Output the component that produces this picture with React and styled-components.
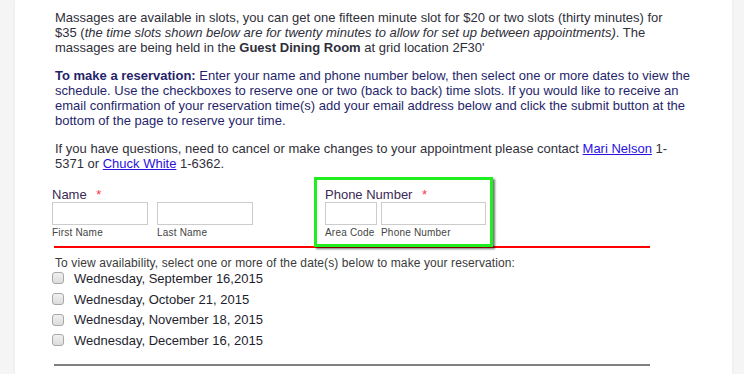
import React from "react";
import styled, { createGlobalStyle } from "styled-components";

const GlobalStyle = createGlobalStyle`
  html, body {
    margin: 0;
    padding: 0;
    background: #f5f5f5;
    font-family: "Liberation Sans", Arial, sans-serif;
  }
`;

const dates = [
  "Wednesday, September 16,2015",
  "Wednesday, October 21, 2015",
  "Wednesday, November 18, 2015",
  "Wednesday, December 16, 2015",
];

const App = () => {
  return (
    <>
      <GlobalStyle />
      <Page>
        <Panel>
          <Intro>
            <Para>
              Massages are available in slots, you can get one fifteen minute slot for $20 or two
              slots (thirty minutes) for {"$35\u00a0("}
              <i>the time slots shown below are for twenty minutes to allow for set up between appointments)</i>.
              The massages are being held in the <b>Guest Dining Room</b> at grid location 2F30'
            </Para>
            <Para $tone="navy">
              <b>To make a reservation:</b> Enter your name and phone number below, then select one
              or more dates to view the schedule. Use the checkboxes to reserve one or two (back to
              back) time slots. If you would like to receive an email confirmation of your
              reservation time(s) add your email address below and click the submit button at the
              bottom of the page to reserve your time.
            </Para>
            <Para>
              If you have questions, need to cancel or make changes to your appointment please
              contact <Link href="#">Mari Nelson</Link> 1-5371 or <Link href="#">Chuck White</Link> 1-6362.
            </Para>
          </Intro>

          <FormRow>
            <FieldGroup>
              <FieldLabel>
                Name <Required>*</Required>
              </FieldLabel>
              <Inputs>
                <SubField>
                  <TextInput $w={96} />
                  <SubLabel>First Name</SubLabel>
                </SubField>
                <SubField>
                  <TextInput $w={96} />
                  <SubLabel>Last Name</SubLabel>
                </SubField>
              </Inputs>
            </FieldGroup>

            <FieldGroup $highlight>
              <FieldLabel>
                Phone Number <Required>*</Required>
              </FieldLabel>
              <Inputs $gap={4}>
                <SubField>
                  <TextInput $w={52} />
                  <SubLabel>Area Code</SubLabel>
                </SubField>
                <SubField>
                  <TextInput $w={105} />
                  <SubLabel>Phone Number</SubLabel>
                </SubField>
              </Inputs>
            </FieldGroup>
          </FormRow>
          <Rule $color="#ff0000" />

          <Dates>
            <Hint>To view availability, select one or more of the date(s) below to make your reservation:</Hint>
            {dates.map((d) => (
              <DateRow key={d}>
                <Check />
                <DateText>{d}</DateText>
              </DateRow>
            ))}
          </Dates>
          <Rule $color="#808080" $top={13} />
        </Panel>
      </Page>
    </>
  );
};

export default App;

const Page = styled.div`
  display: flex;
  height: 374px;
  overflow: hidden;
  padding: 0 12px 0 15px;
`;

const Panel = styled.main`
  flex: 1;
  background: #ffffff;
  box-shadow: -1px 0 2px rgba(0, 0, 0, 0.04), 1px 0 2px rgba(0, 0, 0, 0.04);
  padding-top: 10px;
`;

const Intro = styled.section`
  padding-left: 40px;
  width: 636px;
  display: flex;
  flex-direction: column;
  gap: 13px;
`;

const Para = styled.p`
  margin: 0;
  font-size: 13px;
  line-height: 15px;
  color: ${(p) => (p.$tone === "navy" ? "#261f6b" : "#2f2f3a")};

  b {
    font-weight: bold;
  }
`;

const Link = styled.a`
  color: #2a12e0;
  text-decoration: underline;
`;

const FormRow = styled.div`
  display: flex;
  align-items: flex-start;
  gap: 54px;
  margin-top: 6px;
  padding-left: 26px;
`;

const FieldGroup = styled.div`
  position: relative;
  z-index: 1;
  border: 3px solid ${(p) => (p.$highlight ? "#1fef1f" : "transparent")};
  box-shadow: ${(p) => (p.$highlight ? "2px 2px 2px rgba(0,0,0,0.55)" : "none")};
  background: ${(p) => (p.$highlight ? "#ffffff" : "transparent")};
  padding: 8px 4px 4px 8px;
`;

const FieldLabel = styled.div`
  font-size: 13px;
  line-height: 14px;
  color: #3a2a55;
`;

const Required = styled.span`
  color: #ff3050;
  margin-left: 6px;
`;

const Inputs = styled.div`
  display: flex;
  gap: ${(p) => p.$gap ?? 9}px;
`;

const SubField = styled.div`
  display: flex;
  flex-direction: column;
`;

const TextInput = styled.input`
  box-sizing: border-box;
  width: ${(p) => p.$w}px;
  height: 23px;
  border: 1px solid #cccccc;
  margin: 0;
  padding: 0;
  background: #ffffff;
`;

const SubLabel = styled.span`
  font-size: 10px;
  line-height: 15px;
  color: #444444;
  letter-spacing: 0.2px;
`;

const Rule = styled.hr`
  margin: ${(p) => (p.$top ? `${p.$top}px` : "-1px")} 0 0 39px;
  width: 596px;
  height: 2px;
  border: 0;
  background: ${(p) => p.$color};
`;

const Dates = styled.section`
  padding-left: 37px;
  margin-top: 8px;
`;

const Hint = styled.div`
  padding-left: 3px;
  margin-bottom: -3px;
  font-size: 12px;
  line-height: 15px;
  color: #3a3a3a;
  letter-spacing: 0.1px;
`;

const DateRow = styled.label`
  display: flex;
  align-items: center;
  gap: 10px;
  height: 20.7px;
`;

const Check = styled.span`
  box-sizing: border-box;
  width: 12px;
  height: 12px;
  border: 1px solid #a8a8a8;
  border-radius: 3px;
  background: linear-gradient(#f0f0f0, #dcdcdc);
`;

const DateText = styled.span`
  font-size: 13px;
  color: #1e1e2e;
`;
